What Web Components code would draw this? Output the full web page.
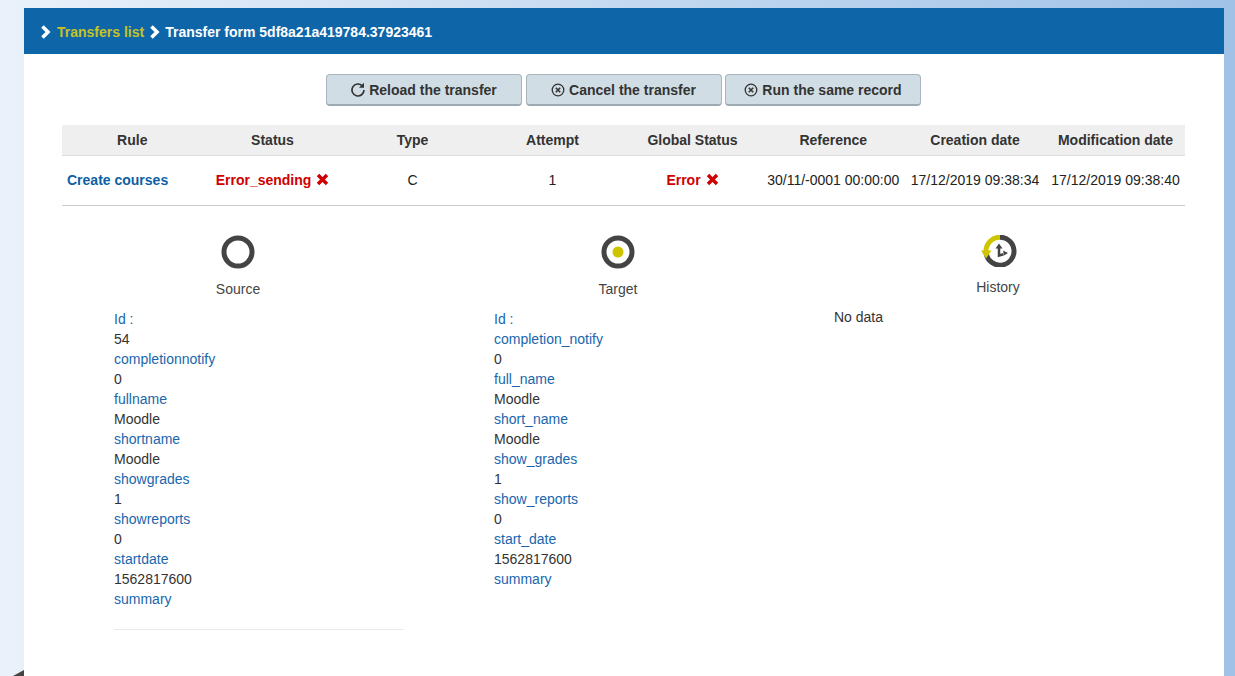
<!DOCTYPE html>
<html>
<head>
<meta charset="utf-8">
<title>Transfer form</title>
<style>
    html, body { margin: 0; height: 100%; overflow: hidden; }
    body {
        background: linear-gradient(to right, #eaf1fa, #a0c2e7);
        font-family: 'Liberation Sans', Arial, sans-serif;
        font-size: 14px;
        color: #333;
    }
</style>
</head>
<body>
<transfer-page></transfer-page>

<script>
const chevron = `<svg width="11" height="14" viewBox="0 0 11 14"><path d="M2.500 1.500 8 7l-5.500 5.500" fill="none" stroke="currentColor" stroke-width="3.600"/></svg>`;
const cross = `<svg width="13" height="13" viewBox="0 0 13 13"><path d="M2 2l9 9M11 2l-9 9" fill="none" stroke="currentColor" stroke-width="3.400"/></svg>`;
const icons = {
    reload: `<svg width="14" height="15" viewBox="0 0 14 15"><path d="M11.300 3.800A6 6 0 1 0 13 8" fill="none" stroke="currentColor" stroke-width="1.700"/><path d="M13 .8v5H8z" fill="currentColor"/></svg>`,
    cancel: `<svg width="14" height="14" viewBox="0 0 14 14"><circle cx="7" cy="7" r="5.800" fill="none" stroke="currentColor" stroke-width="1.300"/><path d="M4.800 4.800l4.400 4.400M9.200 4.800l-4.400 4.400" stroke="currentColor" stroke-width="1.600"/></svg>`
};

class BreadcrumbBar extends HTMLElement {
    constructor() {
        super();
        this.attachShadow({mode: 'open'}).innerHTML = `
            <style>
                :host { display: flex; align-items: center; box-sizing: border-box; height: 46px; padding: 2px 0 0 16px; background: #0e66a9; color: #fff; font-weight: bold; font-size: 14px; }
                svg { margin-right: 5px; }
                svg:first-of-type { margin-right: 6px; }
                .link { color: #c5c224; margin-right: 5px; }
            </style>
            ${chevron}<span class="link">Transfers list</span>${chevron}<span>Transfer form 5df8a21a419784.37923461</span>`;
    }
}
customElements.define('breadcrumb-bar', BreadcrumbBar);

class ActionButton extends HTMLElement {
    constructor() {
        super();
        this.attachShadow({mode: 'open'}).innerHTML = `
            <style>
                :host { display: flex; align-items: center; justify-content: center; gap: 4px; box-sizing: border-box; width: 196px; height: 32px; background: #d0dde4; border: 1px solid #a9b5bc; border-bottom: 2px solid #9eaab1; border-radius: 4px; font-weight: bold; color: #333; }
                svg { display: block; }
            </style>
            ${icons[this.getAttribute('icon')]}<slot></slot>`;
    }
}
customElements.define('action-button', ActionButton);

class TransferTable extends HTMLElement {
    constructor() {
        super();
        const heads = ['Rule', 'Status', 'Type', 'Attempt', 'Global Status', 'Reference', 'Creation date', 'Modification date'];
        this.attachShadow({mode: 'open'}).innerHTML = `
            <style>
                :host { display: block; margin: 0 39px 0 38px; }
                .row { display: grid; grid-template-columns: 140.500px 140px 140px 140px 140px 141.500px 142px 139px; align-items: center; text-align: center; }
                .head { height: 31px; background: #efefef; border-bottom: 1px solid #ddd; box-sizing: border-box; font-weight: bold; }
                .body { height: 50px; padding-bottom: 2px; border-bottom: 1px solid #ccc; box-sizing: border-box; color: #222; white-space: nowrap; }
                .rule { text-align: left; padding-left: 5px; font-weight: bold; color: #0e5fa3; }
                .err { display: flex; align-items: center; justify-content: center; gap: 5px; font-weight: bold; color: #d00000; }
                .date { margin: 0 -6px; }
            </style>
            <div class="row head">${heads.map(h => `<div>${h}</div>`).join('')}</div>
            <div class="row body">
                <div class="rule">Create courses</div>
                <div class="err">Error_sending ${cross}</div>
                <div>C</div>
                <div>1</div>
                <div class="err">Error ${cross}</div>
                <div class="date">30/11/-0001 00:00:00</div>
                <div class="date">17/12/2019 09:38:34</div>
                <div class="date">17/12/2019 09:38:40</div>
            </div>`;
    }
}
customElements.define('transfer-table', TransferTable);

class RecordColumn extends HTMLElement {
    constructor() {
        super();
        this.attachShadow({mode: 'open'}).innerHTML = `
            <style>
                :host { display: block; width: 380px; }
                .top { display: flex; flex-direction: column; align-items: center; gap: 12px; width: 380px; color: #444; }
                .top svg { display: block; }
                .fields { padding: 12px 0 0 66px; line-height: 20px; }
                ::slotted(b) { display: block; font-weight: normal; color: #1a66ad; }
                ::slotted(span) { display: block; color: #333; }
            </style>
            <div class="top"><slot name="icon"></slot><div>${this.getAttribute('label')}</div></div>
            <div class="fields"><slot></slot></div>`;
    }
}
customElements.define('record-column', RecordColumn);

// turns a flat [key, value, key, value...] list into light dom children
function fields(list) {
    return list.map((t, i) => i % 2 ? `<span>${t}</span>` : `<b>${t}</b>`).join('');
}

class TransferPage extends HTMLElement {
    constructor() {
        super();
        this.attachShadow({mode: 'open'}).innerHTML = `
            <style>
                :host { display: block; box-sizing: border-box; width: 1200px; height: 668px; margin: 8px 0 0 24px; background: #fff; position: relative; }
                .actions { display: flex; justify-content: center; gap: 3.500px; padding: 20px 1px 19px 0; }
                .records { display: flex; padding: 29px 0 0 24px; }
                .line { width: 290px; height: 1px; margin: 20px 0 0 66px; background: #eaeaea; }
                .corner { position: absolute; left: -11px; bottom: 0; width: 11px; height: 6px; background: #444; clip-path: polygon(100% 0, 100% 100%, 0 100%); }
                svg { display: block; }
            </style>
            <breadcrumb-bar></breadcrumb-bar>
            <div class="actions">
                <action-button icon="reload">Reload the transfer</action-button>
                <action-button icon="cancel">Cancel the transfer</action-button>
                <action-button icon="cancel">Run the same record</action-button>
            </div>
            <transfer-table></transfer-table>
            <div class="records">
                <div>
                    <record-column label="Source">
                        <svg slot="icon" width="34" height="34" viewBox="0 0 34 34"><circle cx="17" cy="17" r="14" fill="none" stroke="#444" stroke-width="5"/></svg>
                        ${fields(['Id :', '54', 'completionnotify', '0', 'fullname', 'Moodle', 'shortname', 'Moodle', 'showgrades', '1', 'showreports', '0', 'startdate', '1562817600', 'summary'])}
                    </record-column>
                    <div class="line"></div>
                </div>
                <record-column label="Target">
                    <svg slot="icon" width="34" height="34" viewBox="0 0 34 34"><circle cx="17" cy="17" r="14" fill="none" stroke="#444" stroke-width="5"/><circle cx="17" cy="17" r="5.500" fill="#cfc400"/></svg>
                    ${fields(['Id :', '', 'completion_notify', '0', 'full_name', 'Moodle', 'short_name', 'Moodle', 'show_grades', '1', 'show_reports', '0', 'start_date', '1562817600', 'summary'])}
                </record-column>
                <record-column label="History">
                    <svg slot="icon" width="36" height="32" viewBox="0 -0.500 36 32" style="margin-left:2px"><path d="M19 1.700A14 14 0 1 1 5.200 18" fill="none" stroke="#444" stroke-width="5"/><path d="M19 1.700A14 14 0 0 0 5 15.500" fill="none" stroke="#cfc400" stroke-width="5"/><path d="M0 15h10.500L5 23z" fill="#cfc400"/><path d="M18 12v8l4.500-1.200" fill="none" stroke="#444" stroke-width="2.500"/><path d="M18 8l-3.500 5h7zM27 17.500l-5-2.500 1 5z" fill="#444"/></svg>
                    <div style="margin:0 0 0 -40px">No data</div>
                </record-column>
            </div>
            <div class="corner"></div>`;
    }
}
customElements.define('transfer-page', TransferPage);
</script>
</body>
</html>
